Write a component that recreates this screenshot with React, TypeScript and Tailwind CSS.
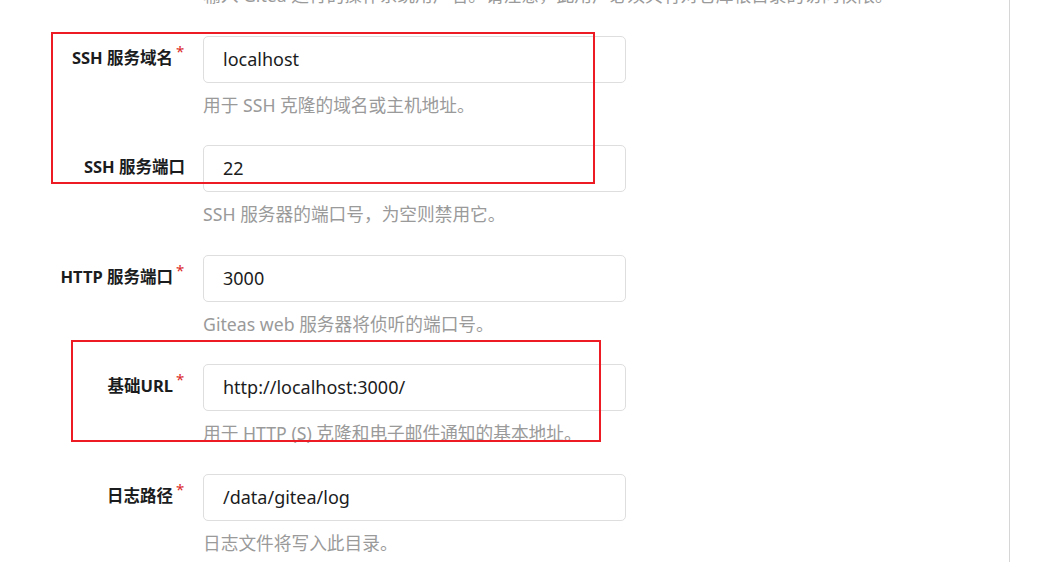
import React from 'react';

interface FieldRow {
  label: string;
  required: boolean;
  value: string;
  help: string;
}

const rows: FieldRow[] = [
  { label: 'SSH 服务域名', required: true, value: 'localhost', help: '用于 SSH 克隆的域名或主机地址。' },
  { label: 'SSH 服务端口', required: false, value: '22', help: 'SSH 服务器的端口号，为空则禁用它。' },
  { label: 'HTTP 服务端口', required: true, value: '3000', help: 'Giteas web 服务器将侦听的端口号。' },
  { label: '基础URL', required: true, value: 'http://localhost:3000/', help: '用于 HTTP (S) 克隆和电子邮件通知的基本地址。' },
  { label: '日志路径', required: true, value: '/data/gitea/log', help: '日志文件将写入此目录。' },
];

function Field({ label, required, value, help }: FieldRow) {
  return (
    <div className="flex">
      {/* Label column */}
      <div className="flex h-[47px] w-[185px] shrink-0 items-center justify-end pb-[2px]">
        <span className="text-[16.5px] font-bold text-[#1b1c1d]">{label}</span>
        {required && (
          <span className="relative -top-[7px] ml-[3px] inline-block w-[9px] text-[15px] leading-none text-[#db2828]">*</span>
        )}
      </div>

      {/* Input + help */}
      <div className="ml-[18px] w-[423px]">
        <div className="flex h-[47px] items-center rounded-[5px] border border-[#dedede] bg-white px-[19px] text-[18px] text-[#1b1c1d]">
          {value}
        </div>
        <p className="mt-[10px] whitespace-nowrap text-[17.7px] leading-[24px] text-[#9a9a9a]">{help}</p>
      </div>
    </div>
  );
}

export default function App() {
  return (
    <div
      className="relative h-[562px] w-[1048px] overflow-hidden bg-white"
      style={{ fontFamily: '"Noto Sans", "Noto Sans CJK SC", sans-serif' }}
    >
      <div className="flex h-full w-[1010px] flex-col gap-[28.5px] border-r border-[#d6d6d6]">
        {/* Tail of the previous field's help text, cut off by the screenshot */}
        <div className="-mt-[17px] ml-[203px] whitespace-nowrap text-[17.7px] leading-[24px] text-[#9a9a9a]">
          输入 Gitea 运行的操作系统用户名。请注意，此用户必须具有对仓库根目录的访问权限。
        </div>
        {rows.map((r) => (
          <Field key={r.label} {...r} />
        ))}
      </div>

      {/* Annotation boxes */}
      <div className="absolute left-[51px] top-[32px] h-[152px] w-[544px] border-2 border-[#ed1c24]" />
      <div className="absolute left-[71px] top-[340px] h-[102px] w-[530px] border-2 border-[#ed1c24]" />
    </div>
  );
}
